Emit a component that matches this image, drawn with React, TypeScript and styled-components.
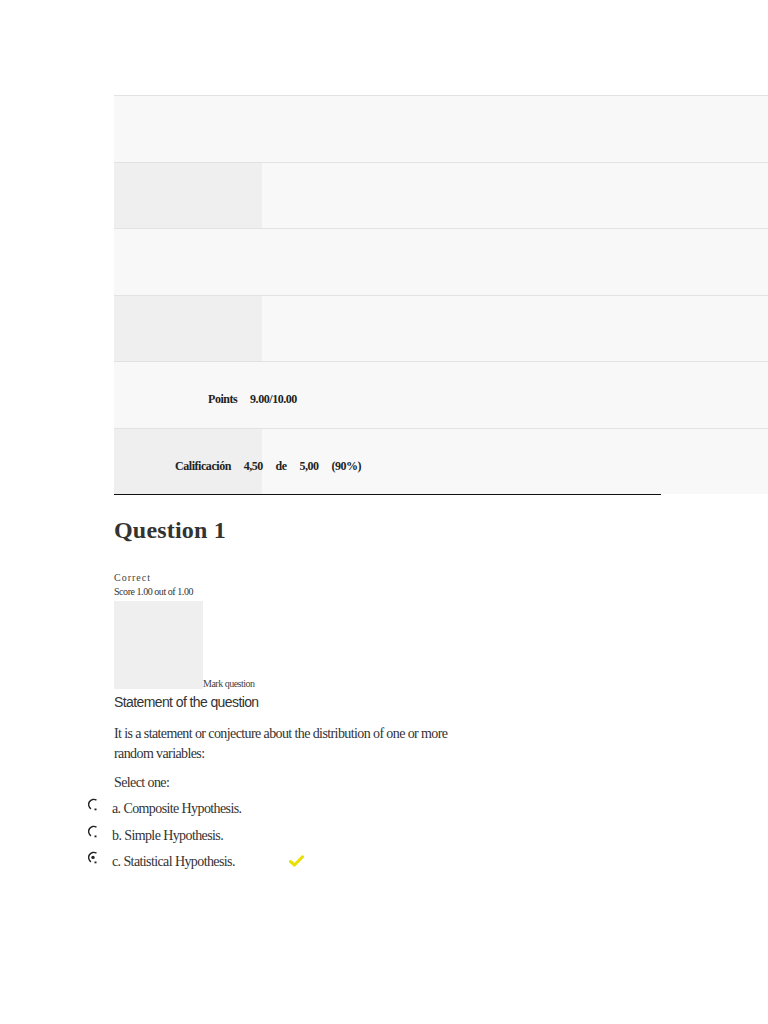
import React from "react";
import styled, { createGlobalStyle } from "styled-components";

const Global = createGlobalStyle`
  html, body { margin: 0; padding: 0; background: #ffffff; }
  body { font-family: "Liberation Serif", "Times New Roman", serif; color: #333; }
`;

const Page = styled.div`
  width: 768px;
  height: 1024px;
  overflow: hidden;
  padding-top: 95px;
  box-sizing: border-box;
`;

const Summary = styled.div`
  margin-left: 114px;
  width: 654px;
  display: flex;
  flex-direction: column;
`;

const Row = styled.div<{ $head?: boolean }>`
  height: 66.5px;
  border-top: 1px solid #e2e2e2;
  background: ${(p) =>
    p.$head
      ? "linear-gradient(to right, #efefef 148px, #f8f8f8 148px)"
      : "#f8f8f8"};
  display: flex;
  align-items: center;
  padding-top: 10px;
  box-sizing: border-box;
  font-family: "Liberation Serif", "Times New Roman", serif;
  font-weight: bold;
  font-size: 12px;
  letter-spacing: -0.45px;
  color: #222;
`;

const RowText = styled.div<{ $indent: number }>`
  padding-left: ${(p) => p.$indent}px;
  white-space: pre;
`;

const Rule = styled.div`
  margin-left: 114px;
  width: 547px;
  height: 1px;
  background: #111;
`;

const Content = styled.div`
  padding-left: 114px;
  display: flex;
  flex-direction: column;
`;

const Heading = styled.h2`
  margin: 20px 0 0;
  font-family: "Liberation Serif", "Times New Roman", serif;
  font-weight: bold;
  font-size: 24px;
  line-height: 30px;
  color: #333;
  letter-spacing: 0.2px;
`;

const State = styled.div`
  margin-top: 27px;
  font-size: 10px;
  line-height: 12px;
  letter-spacing: 1px;
  color: #444;
`;

const Score = styled.div`
  font-size: 10px;
  line-height: 16px;
  letter-spacing: -0.45px;
  color: #333;
`;

const FlagRow = styled.div`
  display: flex;
  align-items: flex-end;
  margin-top: 1px;
`;

const FlagBox = styled.div`
  width: 89px;
  height: 88px;
  background: #efefef;
`;

const FlagLabel = styled.span`
  font-size: 10px;
  line-height: 10px;
  letter-spacing: -0.5px;
  color: #444;
`;

const QTitle = styled.div`
  margin-top: 4px;
  font-family: "Liberation Sans", Arial, sans-serif;
  font-size: 14px;
  line-height: 18px;
  letter-spacing: -0.6px;
  color: #333;
`;

const QText = styled.p`
  margin: 13px 0 0;
  width: 345px;
  font-size: 14px;
  line-height: 20px;
  letter-spacing: -0.6px;
  color: #333;
`;

const Prompt = styled.div`
  margin-top: 9px;
  font-size: 14px;
  line-height: 20px;
  letter-spacing: -0.6px;
  color: #333;
`;

const Options = styled.div`
  margin-top: 3px;
  margin-left: -26px;
  display: flex;
  flex-direction: column;
`;

const Option = styled.div`
  height: 26.5px;
  display: flex;
  align-items: center;
  font-size: 14px;
  letter-spacing: -0.6px;
  color: #333;
`;

const RadioWrap = styled.span`
  width: 24px;
  display: inline-flex;
  align-items: center;
  margin-top: -8px;
`;

const Check = styled.span`
  margin-left: 54px;
  margin-top: -2px;
  display: inline-flex;
`;

const Radio = ({ checked }: { checked?: boolean }) => (
  <svg width="12" height="14" viewBox="0 0 12 14">
    <path
      d="M8.5 2.2 A4.6 4.6 0 1 0 3 10.8"
      fill="none"
      stroke="#222"
      strokeWidth="1.4"
    />
    <rect x="6.5" y="10.5" width="2" height="1.8" fill="#222" />
    {checked && <circle cx="5" cy="6.4" r="1.7" fill="#222" />}
  </svg>
);

const CheckMark = () => (
  <svg width="15" height="12" viewBox="0 0 15 12">
    <path
      d="M1.5 6.5 L5.5 10 L13.5 1.8"
      fill="none"
      stroke="#e8e000"
      strokeWidth="3"
      strokeLinecap="round"
      strokeLinejoin="round"
    />
  </svg>
);

export default function App() {
  return (
    <>
      <Global />
      <Page>
        <Summary>
          <Row />
          <Row $head />
          <Row />
          <Row $head />
          <Row>
            <RowText $indent={94}>{"Points     9.00/10.00"}</RowText>
          </Row>
          <Row $head>
            <RowText $indent={61}>
              {"Calificación     4,50     de     5,00     (90%)"}
            </RowText>
          </Row>
        </Summary>
        <Rule />
        <Content>
          <Heading>Question 1</Heading>
          <State>Correct</State>
          <Score>Score 1.00 out of 1.00</Score>
          <FlagRow>
            <FlagBox />
            <FlagLabel>Mark question</FlagLabel>
          </FlagRow>
          <QTitle>Statement of the question</QTitle>
          <QText>
            It is a statement or conjecture about the distribution of one or
            more random variables:
          </QText>
          <Prompt>Select one:</Prompt>
          <Options>
            <Option>
              <RadioWrap>
                <Radio />
              </RadioWrap>
              a. Composite Hypothesis.
            </Option>
            <Option>
              <RadioWrap>
                <Radio />
              </RadioWrap>
              b. Simple Hypothesis.
            </Option>
            <Option>
              <RadioWrap>
                <Radio checked />
              </RadioWrap>
              c. Statistical Hypothesis.
              <Check>
                <CheckMark />
              </Check>
            </Option>
          </Options>
        </Content>
      </Page>
    </>
  );
}
